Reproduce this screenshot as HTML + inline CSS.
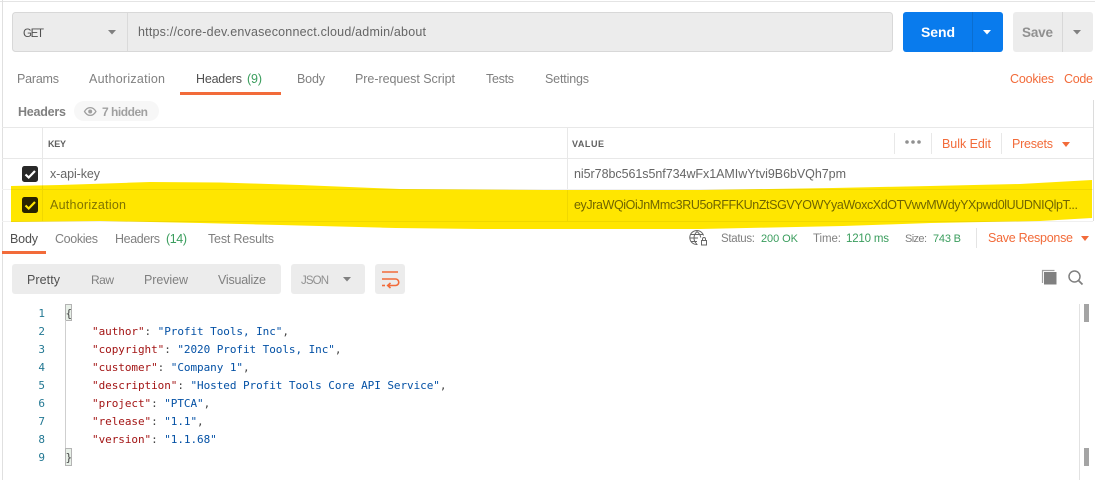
<!DOCTYPE html>
<html><head><meta charset="utf-8"><title>Postman</title>
<style>
html,body{margin:0;padding:0;background:#fff;width:1095px;height:480px;overflow:hidden}
svg{display:block;filter:blur(.3px)}
text{font-family:"Liberation Sans",sans-serif;font-size:12.5px;fill:#808080}
.d{fill:#505050}
.o{fill:#f26b3a}
.g{fill:#3a9d5d}
.b{font-weight:bold;fill:#808080}
.m{font-family:"DejaVu Sans Mono",monospace;font-size:11px;letter-spacing:-.06px;fill:#444;white-space:pre}
.k{fill:#a31515}
.v{fill:#0451a5}
.n{font-family:"DejaVu Sans Mono",monospace;font-size:11px;fill:#237893;text-anchor:end}
</style></head><body>
<svg width="1095" height="480" viewBox="0 0 1095 480" xmlns="http://www.w3.org/2000/svg">
<rect width="1095" height="480" fill="#fff"/>
<rect x="0" y="1" width="1095" height="1" fill="#e4e4e4"/>
<rect x="2" y="0" width="1" height="480" fill="#e0e0e0"/>
<rect x="1093" y="100" width="1" height="121" fill="#dcdcdc"/>

<!-- URL bar -->
<rect x="12.500" y="12.500" width="880" height="39" rx="3" fill="#ececec" stroke="#d8d8d8"/>
<rect x="127" y="13" width="1" height="38" fill="#dadada"/>
<text x="23" y="37" class="d" textLength="21" style="font-size:11.5px">GET</text>
<path d="M108 30h8l-4 4.500z" fill="#808080"/>
<text x="138" y="36" style="fill:#666" textLength="288">https://core-dev.envaseconnect.cloud/admin/about</text>

<rect x="903" y="12" width="100" height="40" rx="3" fill="#097bed"/>
<rect x="972" y="12" width="1" height="40" fill="#0a6ed0"/>
<text x="921" y="37" textLength="34" style="font-weight:bold;font-size:14px;fill:#fff">Send</text>
<path d="M983 30h8l-4 4.500z" fill="#fff"/>
<rect x="1013" y="12" width="80" height="40" rx="3" fill="#ececec"/>
<rect x="1062" y="12" width="1" height="40" fill="#d8d8d8"/>
<text x="1022" y="37" textLength="31" style="font-weight:bold;font-size:13.500px;fill:#909090">Save</text>
<path d="M1073 30h8l-4 4.500z" fill="#808080"/>

<!-- Request tabs -->
<text x="17" y="83" textLength="42">Params</text>
<text x="89" y="83" textLength="76">Authorization</text>
<text x="196" y="83" class="d" textLength="46">Headers</text>
<text x="247" y="83" class="g" textLength="15">(9)</text>
<text x="297" y="83" textLength="28">Body</text>
<text x="355" y="83" textLength="100">Pre-request Script</text>
<text x="486" y="83" textLength="28">Tests</text>
<text x="545" y="83" textLength="44">Settings</text>
<text x="1010" y="83" class="o" textLength="44">Cookies</text>
<text x="1064" y="83" class="o" textLength="29">Code</text>
<rect x="180" y="92" width="101" height="3" fill="#f26b3a"/>

<!-- Headers line -->
<text x="18" y="116" class="b" textLength="48">Headers</text>
<rect x="74" y="101" width="85" height="20" rx="10" fill="#f7f7f7"/>
<path d="M84.500 111.500c1.500-2.600 3.500-3.900 5.700-3.900s4.200 1.300 5.700 3.900c-1.500 2.600-3.500 3.900-5.700 3.900s-4.200-1.300-5.700-3.900z" fill="none" stroke="#a0a0a0" stroke-width="1.300"/>
<circle cx="90.200" cy="111.500" r="2" fill="#a0a0a0"/>
<text x="102" y="116" class="b" textLength="46" style="fill:#a0a0a0;font-size:12px">7 hidden</text>

<!-- Table -->
<g fill="#e8e8e8">
<rect x="2" y="127" width="1091" height="1"/>
<rect x="2" y="158" width="1091" height="1"/>
<rect x="2" y="189" width="1091" height="1" fill="#f0f0f0"/>
<rect x="2" y="221" width="1091" height="1" fill="#f0f0f0"/>
<rect x="42" y="127" width="1" height="62"/>
<rect x="42" y="189" width="1" height="32" fill="#f0f0f0"/>
<rect x="567" y="127" width="1" height="62"/>
<rect x="567" y="189" width="1" height="32" fill="#f0f0f0"/>
<rect x="894" y="133" width="1" height="21"/>
<rect x="931" y="133" width="1" height="21"/>
<rect x="1001" y="133" width="1" height="21"/>
</g>
<text x="48" y="147" textLength="18" style="font-weight:bold;font-size:9px;fill:#606060">KEY</text>
<text x="572" y="147" textLength="32" style="font-weight:bold;font-size:9px;fill:#606060">VALUE</text>
<circle cx="907" cy="142" r="1.800" fill="#909090"/><circle cx="913" cy="142" r="1.800" fill="#909090"/><circle cx="919" cy="142" r="1.800" fill="#909090"/>
<text x="942" y="148" class="o" textLength="49">Bulk Edit</text>
<text x="1012" y="148" class="o" textLength="41">Presets</text>
<path d="M1062 142h8l-4 5z" fill="#f26b3a"/>

<rect x="22" y="166" width="16" height="16" rx="2.500" fill="#282828"/>
<path d="M25.500 174.500l3.200 3 6.300-6.500" fill="none" stroke="#fff" stroke-width="2.200"/>
<text x="50" y="178" style="fill:#666" textLength="50">x-api-key</text>
<text x="574" y="178" style="fill:#666" textLength="272">ni5r78bc561s5nf734wFx1AMIwYtvi9B6bVQh7pm</text>

<rect x="22" y="197" width="16" height="16" rx="2.500" fill="#282828"/>
<path d="M25.500 205.500l3.200 3 6.300-6.500" fill="none" stroke="#fff" stroke-width="2.200"/>
<text x="50" y="209" style="fill:#808080" textLength="76">Authorization</text>
<text x="574" y="209" style="fill:#707070" textLength="504">eyJraWQiOiJnMmc3RU5oRFFKUnZtSGVYOWYyaWoxcXdOTVwvMWdyYXpwd0lUUDNIQlpT...</text>

<!-- Highlighter -->
<path d="M11 186L60 185L150 182L220 182.500L300 185L400 189L545 190L700 190L833 188L930 186L1020 184L1092 180L1092 218L1040 221L931 223L843 226L700 229L600 229L480 229L396 228L280 225L200 223L100 221L11 222Z" fill="#ffe600" style="mix-blend-mode:multiply"/>

<!-- Response tabs -->
<text x="10" y="243" class="d" textLength="28">Body</text>
<text x="55" y="243" textLength="43">Cookies</text>
<text x="115" y="243" textLength="45">Headers</text>
<text x="166" y="243" class="g" textLength="21">(14)</text>
<text x="208" y="243" textLength="66">Test Results</text>
<rect x="2" y="251" width="44" height="3" fill="#f26b3a"/>

<!-- Status -->
<g fill="none" stroke="#666" stroke-width="1">
<path d="M703.500 235.500a7 7 0 1 0-6 9M690 238h8M691 234.500h12M691 241.500h6M697 231.500c-4 4-4 9 0 13M697 231.500c2.500 2 3.500 4 3.800 6"/>
<rect x="701.500" y="240.500" width="5" height="4.500"/>
<path d="M702.500 240.500v-1.500a1.500 1.500 0 0 1 3 0v1.500"/>
</g>
<text x="721" y="242" textLength="34" style="font-size:11.5px">Status:</text>
<text x="761" y="242" class="g" textLength="37" style="font-size:11px">200 OK</text>
<text x="813" y="242" textLength="28" style="font-size:11.5px">Time:</text>
<text x="846" y="242" class="g" textLength="43" style="font-size:11.5px">1210 ms</text>
<text x="905" y="242" textLength="22" style="font-size:11px">Size:</text>
<text x="933" y="242" class="g" textLength="28" style="font-size:11px">743 B</text>
<rect x="976" y="228" width="1" height="20" fill="#e4e4e4"/>
<text x="988" y="242" class="o" textLength="85">Save Response</text>
<path d="M1081 236h8l-4 5z" fill="#f26b3a"/>

<!-- Toolbar -->
<rect x="12" y="264" width="269" height="30" rx="3" fill="#ececec"/>
<text x="27" y="284" class="d" textLength="33">Pretty</text>
<text x="91" y="284" textLength="23" style="font-size:12px">Raw</text>
<text x="144" y="284" textLength="44">Preview</text>
<text x="218" y="284" textLength="48">Visualize</text>
<rect x="291" y="264" width="74" height="30" rx="3" fill="#ececec"/>
<text x="301" y="284" textLength="28" style="fill:#909090;font-size:11.5px">JSON</text>
<path d="M343 277h8l-4 4.500z" fill="#808080"/>
<rect x="375" y="264" width="30" height="30" rx="3" fill="#ececec"/>
<g fill="none" stroke="#f26b3a" stroke-width="1.600">
<path d="M382 272h16M382 279h13.500a2.700 2.700 0 0 1 0 6.500H388"/>
<path d="M382 285.500h3"/>
<path d="M390.500 283l-2.800 2.500 2.800 2.500"/>
</g>

<!-- Icons right -->
<path d="M1042.500 283v-12.500h12" fill="none" stroke="#a0a0a0" stroke-width="1.200"/>
<rect x="1044" y="272" width="12.500" height="12.500" fill="#808080"/>
<circle cx="1074.500" cy="276.500" r="5.500" fill="none" stroke="#808080" stroke-width="1.500"/>
<path d="M1078.500 280.500l4 4" stroke="#808080" stroke-width="1.800" fill="none"/>

<!-- Code -->
<text class="n" x="45" y="317">1</text>
<text class="n" x="45" y="335">2</text>
<text class="n" x="45" y="353">3</text>
<text class="n" x="45" y="371">4</text>
<text class="n" x="45" y="389">5</text>
<text class="n" x="45" y="407">6</text>
<text class="n" x="45" y="425">7</text>
<text class="n" x="45" y="443">8</text>
<text class="n" x="45" y="461">9</text>

<rect x="65.500" y="304.500" width="6" height="16" fill="#e8f0e8" stroke="#b4b4b4"/>
<rect x="65" y="320" width="1" height="128" fill="#cfcfcf"/>
<rect x="65.500" y="448.500" width="6" height="17" fill="#e8f0e8" stroke="#b4b4b4"/>
<text class="m" x="65.500" y="317">{</text>
<text class="m" x="65.500" y="461">}</text>
<text class="m" x="92" y="335"><tspan class="k">"author"</tspan>: <tspan class="v">"Profit Tools, Inc"</tspan>,</text>
<text class="m" x="92" y="353"><tspan class="k">"copyright"</tspan>: <tspan class="v">"2020 Profit Tools, Inc"</tspan>,</text>
<text class="m" x="92" y="371"><tspan class="k">"customer"</tspan>: <tspan class="v">"Company 1"</tspan>,</text>
<text class="m" x="92" y="389"><tspan class="k">"description"</tspan>: <tspan class="v">"Hosted Profit Tools Core API Service"</tspan>,</text>
<text class="m" x="92" y="407"><tspan class="k">"project"</tspan>: <tspan class="v">"PTCA"</tspan>,</text>
<text class="m" x="92" y="425"><tspan class="k">"release"</tspan>: <tspan class="v">"1.1"</tspan>,</text>
<text class="m" x="92" y="443"><tspan class="k">"version"</tspan>: <tspan class="v">"1.1.68"</tspan></text>

<!-- Scroll -->
<rect x="1079" y="304" width="1" height="176" fill="#e2e2e2"/>
<rect x="1084" y="304" width="5" height="18" fill="#a4a4a4"/>
<rect x="1084" y="448" width="5" height="18" fill="#a4a4a4"/>
</svg>
</body></html>
